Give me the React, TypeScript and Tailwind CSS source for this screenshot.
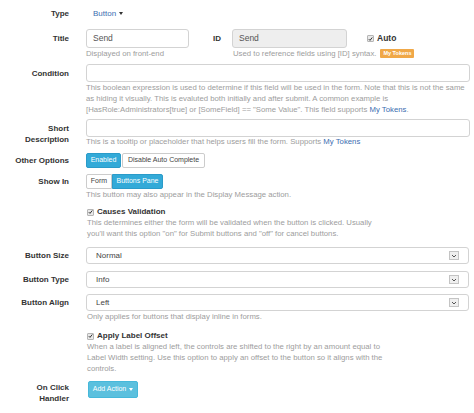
import React from "react";

const font = { fontFamily: '"Liberation Sans", Arial, sans-serif' };

function Label({ children, className = "" }: { children: React.ReactNode; className?: string }) {
  return (
    <div className={`w-[69px] shrink-0 text-right text-[8px] font-bold text-[#333] leading-[11px] ${className}`}>
      {children}
    </div>
  );
}

function Help({ children, className = "" }: { children: React.ReactNode; className?: string }) {
  return <div className={`text-[7.75px] text-[#9d9d9d] leading-[11px] whitespace-nowrap ${className}`}>{children}</div>;
}

function Check() {
  return (
    <span className="inline-flex h-[7px] w-[7px] items-center justify-center rounded-[1px] border border-[#b5b5b5] bg-[#e9e9e9]">
      <svg viewBox="0 0 8 8" className="h-[6px] w-[6px]">
        <path d="M1.2 4.2 L3.2 6.2 L6.8 1.6" fill="none" stroke="#333" strokeWidth="1.6" />
      </svg>
    </span>
  );
}

function Select({ value }: { value: string }) {
  return (
    <div className="flex h-[17px] flex-1 items-center rounded-[3px] border border-[#d3d3d3] bg-white pl-[9px] pr-[9px] text-[8px] text-[#444]">
      <span className="flex-1">{value}</span>
      <span className="flex h-[9px] w-[10px] items-center justify-center border border-[#c4c4c4] bg-[#efefef]">
        <svg viewBox="0 0 8 6" className="h-[4px] w-[6px]">
          <path d="M1 1.5 L4 4.5 L7 1.5" fill="none" stroke="#555" strokeWidth="1.5" />
        </svg>
      </span>
    </div>
  );
}

function Caret({ color = "#333" }: { color?: string }) {
  return (
    <span
      className="ml-[3px] inline-block h-0 w-0 border-x-[2.5px] border-t-[3px] border-x-transparent align-middle"
      style={{ borderTopColor: color }}
    />
  );
}

export default function App() {
  return (
    <div className="h-[413px] w-[474px] overflow-hidden bg-white" style={font}>
      {/* Type */}
      <div className="flex items-center pt-[8px]">
        <Label className="leading-[10px]">Type</Label>
        <div className="ml-[24px] text-[8px] leading-[10px] text-[#3b6db0]">
          Button<Caret />
        </div>
      </div>

      {/* Title / ID */}
      <div className="mt-[10px] flex items-center">
        <Label>Title</Label>
        <div className="ml-[17px] flex h-[19px] w-[103px] items-center rounded-[3px] border border-[#d3d3d3] bg-white pl-[6px] text-[8.5px] text-[#555]">
          Send
        </div>
        <div className="w-[43px] pr-[11px] text-right text-[8px] font-bold text-[#333]">ID</div>
        <div className="flex h-[19px] w-[115px] items-center rounded-[3px] border border-[#d3d3d3] bg-[#eeeeee] pl-[6px] text-[8.5px] text-[#555]">
          Send
        </div>
        <div className="ml-[20px] flex items-center gap-[3px]">
          <Check />
          <span className="text-[8.5px] font-bold text-[#333]">Auto</span>
        </div>
      </div>
      <div className="flex">
        <div className="w-[86px] shrink-0" />
        <Help className="w-[147px]">Displayed on front-end</Help>
        <Help className="flex items-center">
          Used to reference fields using [ID] syntax.
          <span className="ml-[4px] inline-flex h-[9px] items-center rounded-[1px] bg-[#f0a848] px-[3px] text-[5.5px] font-bold text-white">
            My Tokens
          </span>
        </Help>
      </div>

      {/* Condition */}
      <div className="mt-[5px] flex items-center">
        <Label>Condition</Label>
        <div className="ml-[17px] mr-[4px] h-[18px] flex-1 rounded-[3px] border border-[#d3d3d3] bg-white" />
      </div>
      <div className="flex">
        <div className="w-[86px] shrink-0" />
        <Help>
          This boolean expression is used to determine if this field will be used in the form. Note that this is not the same
          <br />
          as hiding it visually. This is evaluted both initially and after submit. A common example is
          <br />
          [HasRole:Administrators[true] or [SomeField] == "Some Value". This field supports{" "}
          <span className="text-[#3b6db0]">My Tokens</span>.
        </Help>
      </div>

      {/* Short Description */}
      <div className="mt-[4px] flex items-start">
        <Label className="pt-[4px] leading-[10.5px]">
          Short
          <br />
          Description
        </Label>
        <div className="ml-[17px] mr-[4px] h-[18px] flex-1 rounded-[3px] border border-[#d3d3d3] bg-white" />
      </div>
      <div className="-mt-[9px] flex">
        <div className="w-[86px] shrink-0" />
        <Help>
          This is a tooltip or placeholder that helps users fill the form. Supports{" "}
          <span className="text-[#3b6db0]">My Tokens</span>
        </Help>
      </div>

      {/* Other Options */}
      <div className="mt-[6px] flex items-center">
        <Label>Other Options</Label>
        <div className="ml-[17px] flex gap-[1px] text-[7px]">
          <span className="flex h-[15px] w-[35px] items-center justify-center rounded-[2px] border border-[#2b9bc9] bg-[#33aad8] text-white">
            Enabled
          </span>
          <span className="flex h-[15px] w-[83px] items-center justify-center rounded-[2px] border border-[#cccccc] bg-white text-[#444]">
            Disable Auto Complete
          </span>
        </div>
      </div>

      {/* Show In */}
      <div className="mt-[6px] flex items-center">
        <Label>Show In</Label>
        <div className="ml-[17px] flex text-[7px]">
          <span className="flex h-[15px] w-[26px] items-center justify-center rounded-l-[2px] border border-[#cccccc] bg-white text-[#444]">
            Form
          </span>
          <span className="flex h-[15px] w-[51px] items-center justify-center rounded-r-[2px] border border-[#2b9bc9] bg-[#33aad8] text-white">
            Buttons Pane
          </span>
        </div>
      </div>
      <div className="flex">
        <div className="w-[86px] shrink-0" />
        <Help>This button may also appear in the Display Message action.</Help>
      </div>

      {/* Causes Validation */}
      <div className="mt-[7px] flex">
        <div className="w-[87px] shrink-0" />
        <div>
          <div className="flex items-center gap-[3px] leading-[10px]">
            <Check />
            <span className="text-[8px] font-bold text-[#333]">Causes Validation</span>
          </div>
          <Help className="leading-[11.5px]">
            This determines either the form will be validated when the button is clicked. Usually
            <br />
            you'll want this option "on" for Submit buttons and "off" for cancel buttons.
          </Help>
        </div>
      </div>

      {/* Selects */}
      <div className="mt-[8px] flex items-center pr-[5px]">
        <Label>Button Size</Label>
        <div className="ml-[17px] flex flex-1">
          <Select value="Normal" />
        </div>
      </div>
      <div className="mt-[7px] flex items-center pr-[5px]">
        <Label>Button Type</Label>
        <div className="ml-[17px] flex flex-1">
          <Select value="Info" />
        </div>
      </div>
      <div className="mt-[6px] flex items-center pr-[5px]">
        <Label>Button Align</Label>
        <div className="ml-[17px] flex flex-1">
          <Select value="Left" />
        </div>
      </div>
      <div className="flex">
        <div className="w-[87px] shrink-0" />
        <Help>Only applies for buttons that display inline in forms.</Help>
      </div>

      {/* Apply Label Offset */}
      <div className="mt-[9px] flex">
        <div className="w-[87px] shrink-0" />
        <div>
          <div className="flex items-center gap-[3px] leading-[10px]">
            <Check />
            <span className="text-[8px] font-bold text-[#333]">Apply Label Offset</span>
          </div>
          <Help className="leading-[11.5px]">
            When a label is aligned left, the controls are shifted to the right by an amount equal to
            <br />
            Label Width setting. Use this option to apply an offset to the button so it aligns with the
            <br />
            controls.
          </Help>
        </div>
      </div>

      {/* On Click Handler */}
      <div className="mt-[7px] flex items-start">
        <Label className="pt-[1px]">
          On Click
          <br />
          Handler
        </Label>
        <div className="ml-[19px] flex h-[17px] w-[50px] items-center justify-center rounded-[2px] border border-[#46b8da] bg-[#5bc0de] text-[7px] text-white">
          Add Action<Caret color="#fff" />
        </div>
      </div>
    </div>
  );
}
